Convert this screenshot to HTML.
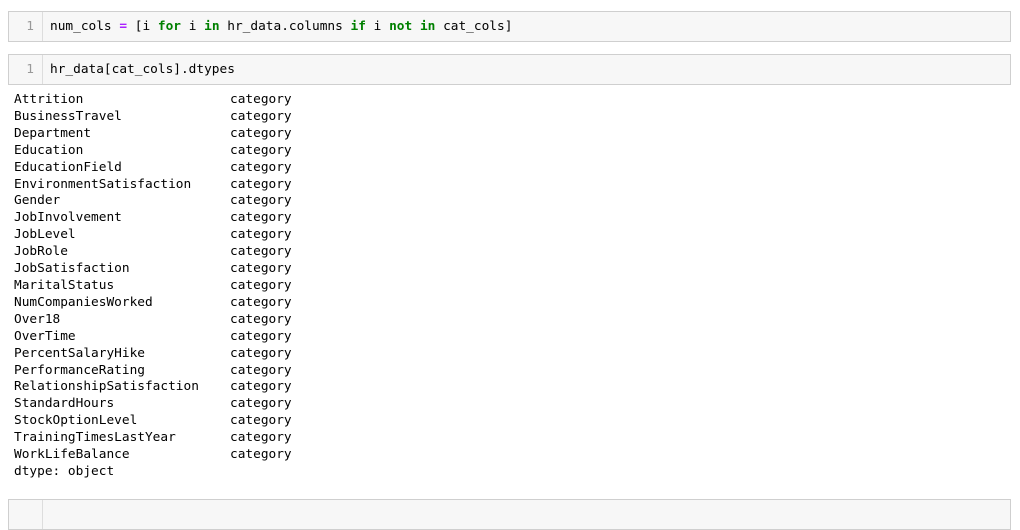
<!DOCTYPE html>
<html><head><style>
body{margin:0;width:1020px;height:502px;background:#fff;overflow:hidden;position:relative;font-family:"DejaVu Sans Mono",monospace;font-size:12.8px;color:#000}
.cell{position:absolute;left:8px;width:1003px;background:#f7f7f7;border:1px solid #cfcfcf;box-sizing:border-box}
.g{position:absolute;left:0;top:0;bottom:0;width:34px;border-right:1px solid #ddd;color:#999;text-align:right;padding-right:8px;box-sizing:border-box}
.c{position:absolute;left:41px;white-space:pre}
.k{color:#008000;font-weight:bold}.o{color:#aa22ff;font-weight:bold}
.out{position:absolute;left:14px;top:92px;line-height:16.9px;white-space:pre}
.out span{display:inline-block;width:216px}
</style></head><body>
<div class="cell" style="top:11px;height:31px"><div class="g" style="line-height:30px">1</div><div class="c" style="line-height:30px">num_cols <span class="o">=</span> [i <span class="k">for</span> i <span class="k">in</span> hr_data.columns <span class="k">if</span> i <span class="k">not</span> <span class="k">in</span> cat_cols]</div></div>
<div class="cell" style="top:54px;height:31px"><div class="g" style="line-height:30px">1</div><div class="c" style="line-height:30px">hr_data[cat_cols].dtypes</div></div>
<div class="out"><span>Attrition</span>category
<span>BusinessTravel</span>category
<span>Department</span>category
<span>Education</span>category
<span>EducationField</span>category
<span>EnvironmentSatisfaction</span>category
<span>Gender</span>category
<span>JobInvolvement</span>category
<span>JobLevel</span>category
<span>JobRole</span>category
<span>JobSatisfaction</span>category
<span>MaritalStatus</span>category
<span>NumCompaniesWorked</span>category
<span>Over18</span>category
<span>OverTime</span>category
<span>PercentSalaryHike</span>category
<span>PerformanceRating</span>category
<span>RelationshipSatisfaction</span>category
<span>StandardHours</span>category
<span>StockOptionLevel</span>category
<span>TrainingTimesLastYear</span>category
<span>WorkLifeBalance</span>category
dtype: object</div>
<div class="cell" style="top:499px;height:31px"><div class="g"></div></div>
</body></html>
